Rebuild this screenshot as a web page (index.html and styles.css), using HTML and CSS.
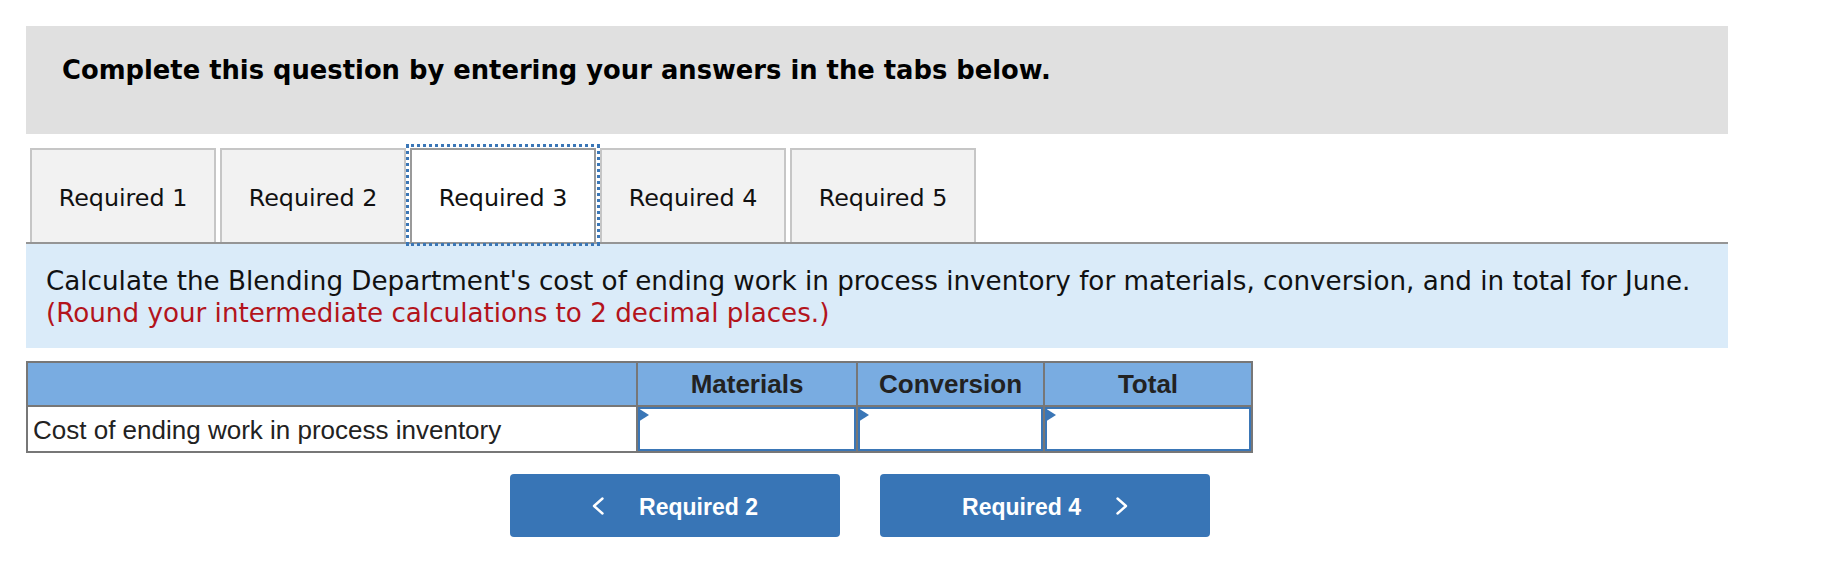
FILE: index.html
```html
<!DOCTYPE html>
<html lang="en">
<head>
<meta charset="utf-8">
<title>Required 3</title>
<link rel="stylesheet" href="styles.css">
</head>
<body>
<div class="page">
  <div class="intro">Complete this question by entering your answers in the tabs below.</div>

  <div class="tabs">
    <div class="tab">Required 1</div>
    <div class="tab">Required 2</div>
    <div class="tab active">Required 3</div>
    <div class="tab">Required 4</div>
    <div class="tab">Required 5</div>
  </div>

  <div class="prompt">
    <span class="line">Calculate the Blending Department's cost of ending work in process inventory for materials, conversion, and in total for June.</span>
    <span class="line note">(Round your intermediate calculations to 2 decimal places.)</span>
  </div>

  <div class="grid">
    <div class="hcell"></div>
    <div class="hcell">Materials</div>
    <div class="hcell">Conversion</div>
    <div class="hcell">Total</div>
    <div class="label">Cost of ending work in process inventory</div>
    <div class="incell"><input class="field" type="text" aria-label="Materials"><span class="flag"></span></div>
    <div class="incell"><input class="field" type="text" aria-label="Conversion"><span class="flag"></span></div>
    <div class="incell"><input class="field" type="text" aria-label="Total"><span class="flag"></span></div>
  </div>

  <div class="nav">
    <button class="navbtn" type="button">
      <svg class="chev" width="12" height="18" viewBox="0 0 12 18"><polyline points="10.5,1.5 2,9 10.5,16.5" fill="none" stroke="#fff" stroke-width="2.4" stroke-linecap="round" stroke-linejoin="round"/></svg>
      <span class="btxt">Required 2</span>
    </button>
    <button class="navbtn" type="button">
      <span class="btxt">Required 4</span>
      <svg class="chev" width="12" height="18" viewBox="0 0 12 18"><polyline points="1.5,1.5 10,9 1.5,16.5" fill="none" stroke="#fff" stroke-width="2.4" stroke-linecap="round" stroke-linejoin="round"/></svg>
    </button>
  </div>
</div>
</body>
</html>
```

FILE: styles.css
```css
html, body {
  margin: 0;
  padding: 0;
  background: #ffffff;
}

body {
  font-family: "DejaVu Sans", Verdana, sans-serif;
  color: #000;
}

.page {
  padding: 26px;
  width: 1702px;
}

.intro {
  background: #e0e0e0;
  height: 108px;
  box-sizing: border-box;
  padding: 29px 36px 0;
  font-weight: bold;
  font-size: 25.8px;
  line-height: 30px;
  color: #000;
}

.tabs {
  display: flex;
  gap: 4px;
  padding-left: 4px;
  margin-top: 14px;
}

.tab {
  width: 186px;
  height: 94px;
  box-sizing: border-box;
  border: 2px solid #c6c6c6;
  border-bottom: 0;
  background: #f2f2f2;
  display: flex;
  align-items: center;
  justify-content: center;
  padding-top: 4px;
  font-size: 23.8px;
  color: #111;
}

.tab.active {
  background: #ffffff;
  border-color: #9a9a9a;
  outline: 3px dotted #3a76b6;
  outline-offset: 1px;
  position: relative;
  z-index: 1;
}

.prompt {
  border-top: 2px solid #959595;
  background: #daebf9;
  padding: 21px 20px 19px;
  font-size: 26.2px;
  line-height: 32px;
  color: #111;
}

.line {
  display: block;
  white-space: nowrap;
}

.note {
  color: #b3141c;
}

.grid {
  margin-top: 13px;
  display: grid;
  grid-template-columns: 608px 218px 185px 206px;
  grid-template-rows: 42px 44px;
  gap: 2px;
  border: 2px solid #777;
  background: #777;
  width: fit-content;
  font-family: "Liberation Sans", Arial, sans-serif;
  color: #222;
}

.hcell {
  background: #79ace1;
  display: flex;
  align-items: center;
  justify-content: center;
  font-weight: bold;
  font-size: 26px;
}

.label {
  background: #fff;
  display: flex;
  align-items: center;
  padding-left: 5px;
  padding-top: 2px;
  font-size: 26px;
}

.incell {
  background: #fff;
  position: relative;
}

.field {
  display: block;
  width: 100%;
  height: 100%;
  box-sizing: border-box;
  margin: 0;
  border: 2px solid #3a76b6;
  background: #fff;
  font: 24px "Liberation Sans", Arial, sans-serif;
  padding: 0 6px;
  outline: none;
}

.flag {
  position: absolute;
  left: 0;
  top: 1px;
  width: 0;
  height: 0;
  border-left: 11px solid #3a76b6;
  border-top: 7px solid transparent;
  border-bottom: 7px solid transparent;
}

.nav {
  display: flex;
  gap: 40px;
  margin: 21px 0 0 484px;
}

.navbtn {
  width: 330px;
  height: 63px;
  border: 0;
  border-radius: 4px;
  background: #3875b6;
  color: #fff;
  display: flex;
  align-items: center;
  justify-content: center;
  gap: 35px;
  font-family: "Liberation Sans", Arial, sans-serif;
  font-weight: bold;
  font-size: 23px;
  padding: 0;
}

.btxt {
  display: block;
  padding-top: 3px;
}

.chev {
  display: block;
  flex: none;
}
```
